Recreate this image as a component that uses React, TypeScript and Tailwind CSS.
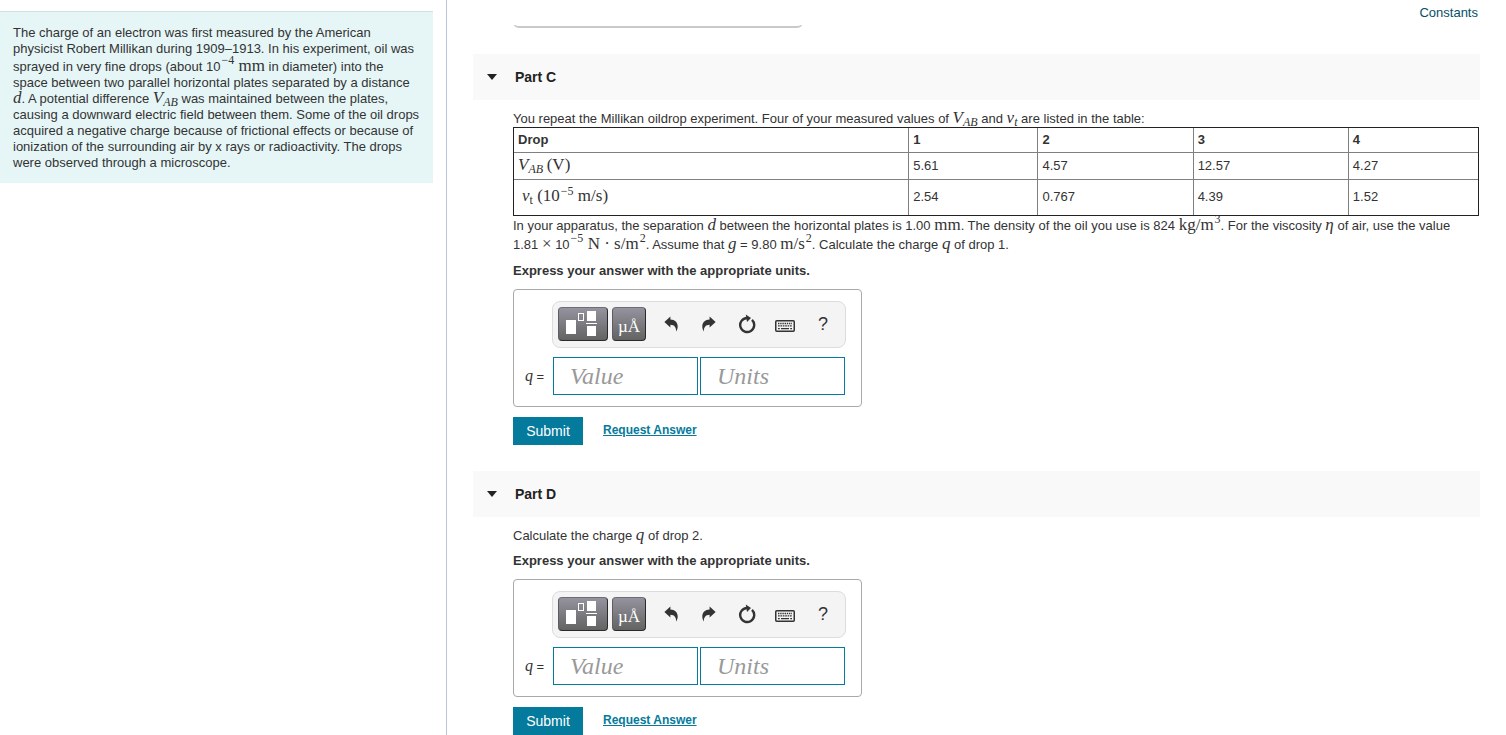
import type { ReactNode } from "react"

const MathText = ({ children, italic = false }: { children: ReactNode; italic?: boolean }) => (
  <span
    className={`font-["Liberation_Serif",serif] text-[17px] leading-0 whitespace-nowrap ${italic ? "italic" : ""}`}
  >
    {children}
  </span>
)

const Sup = ({ children }: { children: ReactNode }) => (
  <sup className="static ml-px align-super text-xs leading-[6px]">{children}</sup>
)

const Sub = ({ children }: { children: ReactNode }) => <sub className="text-xs">{children}</sub>

const Vab = () => (
  <MathText italic>
    V<Sub>AB</Sub>
  </MathText>
)

const TemplatesIcon = () => (
  <svg className="h-7 w-[34px] shrink-0" viewBox="1 0 34 28" fill="none" aria-hidden="true">
    <rect x="1" y="10" width="10" height="14" fill="#fff" />
    <rect x="13.5" y="3.5" width="5" height="7" stroke="#fff" />
    <rect x="22" y="1" width="9" height="10" fill="#fff" />
    <rect x="21" y="13" width="11" height="1" fill="#fff" />
    <rect x="22" y="16" width="9" height="10" fill="#fff" />
  </svg>
)

const UndoIcon = ({ flipped = false }: { flipped?: boolean }) => (
  <svg className={`h-4 w-3.5 ${flipped ? "-scale-x-100" : ""}`} viewBox="0 0 14 16" aria-hidden="true">
    <path
      fill="#333"
      d="M.4 6 6.4.6v2.8C11 3.4 13.7 6.6 13.7 10.4c0 2-.7 3.7-1.6 5 .3-3.7-1.6-6.6-5.7-6.6v2.7Z"
    />
  </svg>
)

const ResetIcon = () => (
  <svg className="h-5 w-[18px]" viewBox="0 0 18 20" fill="none" aria-hidden="true">
    <path d="M14 5.9A7 7 0 1 1 9 4" stroke="#333" strokeWidth="2.4" />
    <path d="M7.8.4 13 3.9 9 8Z" fill="#333" />
  </svg>
)

const KeyboardIcon = () => (
  <svg className="h-3 w-5" viewBox="0 0 20 12" fill="none" aria-hidden="true">
    <rect x=".75" y=".75" width="18.5" height="10.5" rx="1" stroke="#333" strokeWidth="1.5" />
    <path d="M3 3.5h14" stroke="#333" strokeWidth="1.4" strokeDasharray="1.4 .8" />
    <path d="M3 5.9h14" stroke="#333" strokeWidth="1.4" strokeDasharray="1.7 .7" />
    <path d="M3 8.6h1.8M6 8.6h8M15.2 8.6H17" stroke="#333" strokeWidth="1.4" />
  </svg>
)

const toolClass = "flex h-[34px] w-[38px] items-center justify-center"
const darkClass =
  "flex h-[34px] items-center justify-center rounded border border-t-[#6d6d75] border-l-[#5c5c62] border-r-[#2a2a2a] border-b-[#2a2a2a] bg-linear-to-b from-[#95949f] to-[#636363]"
const fieldClass =
  'h-[38px] w-[145px] border border-[#047a9c] bg-white px-4 font-["Liberation_Serif",serif] text-2xl placeholder:italic placeholder:text-[#999] focus:outline-none'

const AnswerBox = ({ id }: { id: string }) => (
  <div className="mt-2.5 w-fit rounded border border-[#a9a9a9] py-[11px] pr-[15px] pl-[11px]">
    <div className="ml-[27px] flex h-[47px] items-start rounded-lg border border-[#dcdcdc] bg-[#f4f4f4] pt-[5px] pr-[3px] pl-[5px]">
      <button type="button" aria-label="Templates" className={`${darkClass} w-[50px]`}>
        <TemplatesIcon />
      </button>
      <button
        type="button"
        aria-label="Symbols"
        className={`${darkClass} ml-1 w-[34px] pt-1 font-["Liberation_Serif",serif] text-[17px] text-white`}
      >
        µÅ
      </button>
      <div className="ml-1.5 flex">
        <button type="button" aria-label="Undo" className={toolClass}>
          <UndoIcon />
        </button>
        <button type="button" aria-label="Redo" className={toolClass}>
          <UndoIcon flipped />
        </button>
        <button type="button" aria-label="Reset" className={toolClass}>
          <ResetIcon />
        </button>
        <button type="button" aria-label="Keyboard" className={`${toolClass} pt-1`}>
          <KeyboardIcon />
        </button>
        <button type="button" aria-label="Help" className={`${toolClass} text-lg text-[#333]`}>
          ?
        </button>
      </div>
    </div>
    <div className="mt-[9px] flex items-center">
      <label htmlFor={`${id}-value`} className="w-7 whitespace-nowrap">
        <span className='font-["Liberation_Serif",serif] text-base leading-0 italic'>q</span> =
      </label>
      <div className="flex gap-0.5">
        <input id={`${id}-value`} type="text" placeholder="Value" className={fieldClass} />
        <input id={`${id}-units`} type="text" placeholder="Units" aria-label="Units" className={fieldClass} />
      </div>
    </div>
  </div>
)

const Part = ({ id, title, children }: { id: string; title: string; children: ReactNode }) => (
  <section>
    <h2>
      <button type="button" className="flex h-[46px] w-full items-center bg-[#f9f9f9] pl-3.5 text-sm font-bold text-[#222]">
        <svg className="mr-[18px] h-1.5 w-2.5" viewBox="0 0 10 6" aria-hidden="true">
          <path d="M0 0h10L5 6Z" fill="#222" />
        </svg>
        {title}
      </button>
    </h2>
    <div className="pt-2.5 pr-px pl-10">
      {children}
      <p className="mt-2 font-bold">Express your answer with the appropriate units.</p>
      <AnswerBox id={id} />
      <div className="mt-2.5 flex items-center">
        <button type="button" className="h-7 w-[70px] bg-[#047a9c] text-sm text-white">
          Submit
        </button>
        <a href="#" className="ml-5 pb-0.5 text-xs font-bold text-[#047a9c] underline">
          Request Answer
        </a>
      </div>
    </div>
  </section>
)

const cellClass = "border-t border-l border-[#808080] px-1 pb-0.5 text-left first:border-l-0"
const headClass = "h-6 border-l border-[#808080] px-1 pb-0.5 text-left font-bold first:border-l-0"

const VOLTAGES = ["5.61", "4.57", "12.57", "4.27"]
const SPEEDS = ["2.54", "0.767", "4.39", "1.52"]

const DropTable = () => (
  <table className="w-full table-fixed border-separate border-spacing-0 border border-[#222]">
    <thead>
      <tr>
        <th className={`${headClass} w-[40.9%]`}>Drop</th>
        <th className={`${headClass} w-[13.4%]`}>1</th>
        <th className={`${headClass} w-[16.1%]`}>2</th>
        <th className={`${headClass} w-[16.1%]`}>3</th>
        <th className={headClass}>4</th>
      </tr>
    </thead>
    <tbody>
      <tr className="h-[27px]">
        <td className={cellClass}>
          <Vab /> <MathText>(V)</MathText>
        </td>
        {VOLTAGES.map((value) => (
          <td key={value} className={cellClass}>
            {value}
          </td>
        ))}
      </tr>
      <tr className="h-9">
        <td className={`${cellClass} pl-2`}>
          <MathText>
            <i>v</i>
            <Sub>t</Sub> (10<Sup>−5</Sup> m/s)
          </MathText>
        </td>
        {SPEEDS.map((value) => (
          <td key={value} className={cellClass}>
            {value}
          </td>
        ))}
      </tr>
    </tbody>
  </table>
)

export default function App() {
  return (
    <div className='flex min-h-screen bg-white font-["Liberation_Sans",Arial,sans-serif] text-[13px] leading-[17px] text-[#333]'>
      <aside className="w-[447px] shrink-0 border-r border-[#b8c7d8] pt-[11px] pr-[13px]">
        <p className="border-t border-[#d5dfe0] bg-[#e6f6f7] pt-[13px] pr-3 pb-3 pl-[13px] leading-4">
          The charge of an electron was first measured by the American physicist Robert Millikan during 1909–1913. In his
          experiment, oil was sprayed in very fine drops (about 10
          <MathText>
            <Sup>−4</Sup> mm
          </MathText>{" "}
          in diameter) into the space between two parallel horizontal plates separated by a distance{" "}
          <MathText italic>d</MathText>. A potential difference <Vab /> was maintained between the plates, causing a
          downward electric field between them. Some of the oil drops acquired a negative charge because of frictional
          effects or because of ionization of the surrounding air by x rays or radioactivity. The drops were observed
          through a microscope.
        </p>
      </aside>

      <main className="min-w-0 flex-1 px-[26px]">
        <div className="flex h-[54px] items-start justify-between pl-10">
          <div className="mt-[25px] flex h-[3px] items-end overflow-hidden">
            <div className="h-4 w-[290px] shrink-0 rounded-b-md border-b-2 border-[#c9c9c9]" />
          </div>
          <a href="#" className="mt-1 mr-0.5 text-[#064f66]">
            Constants
          </a>
        </div>

        <Part id="part-c" title="Part C">
          <p>
            You repeat the Millikan oildrop experiment. Four of your measured values of <Vab /> and{" "}
            <MathText italic>
              v<Sub>t</Sub>
            </MathText>{" "}
            are listed in the table:
          </p>
          <DropTable />
          <p className="leading-[19px]">
            In your apparatus, the separation <MathText italic>d</MathText> between the horizontal plates is 1.00{" "}
            <MathText>mm</MathText>. The density of the oil you use is 824{" "}
            <MathText>
              kg/m<Sup>3</Sup>
            </MathText>
            . For the viscosity <MathText italic>η</MathText> of air, use the value{" "}
            <span className="whitespace-nowrap">
              1.81 <MathText>×</MathText> 10
              <MathText>
                <Sup>−5</Sup> N · s/m<Sup>2</Sup>
              </MathText>
            </span>
            . Assume that <MathText italic>g</MathText> = 9.80{" "}
            <MathText>
              m/s<Sup>2</Sup>
            </MathText>
            . Calculate the charge <MathText italic>q</MathText> of drop 1.
          </p>
        </Part>

        <div className="mt-[26px]">
          <Part id="part-d" title="Part D">
            <p>
              Calculate the charge <MathText italic>q</MathText> of drop 2.
            </p>
          </Part>
        </div>
      </main>
    </div>
  )
}
